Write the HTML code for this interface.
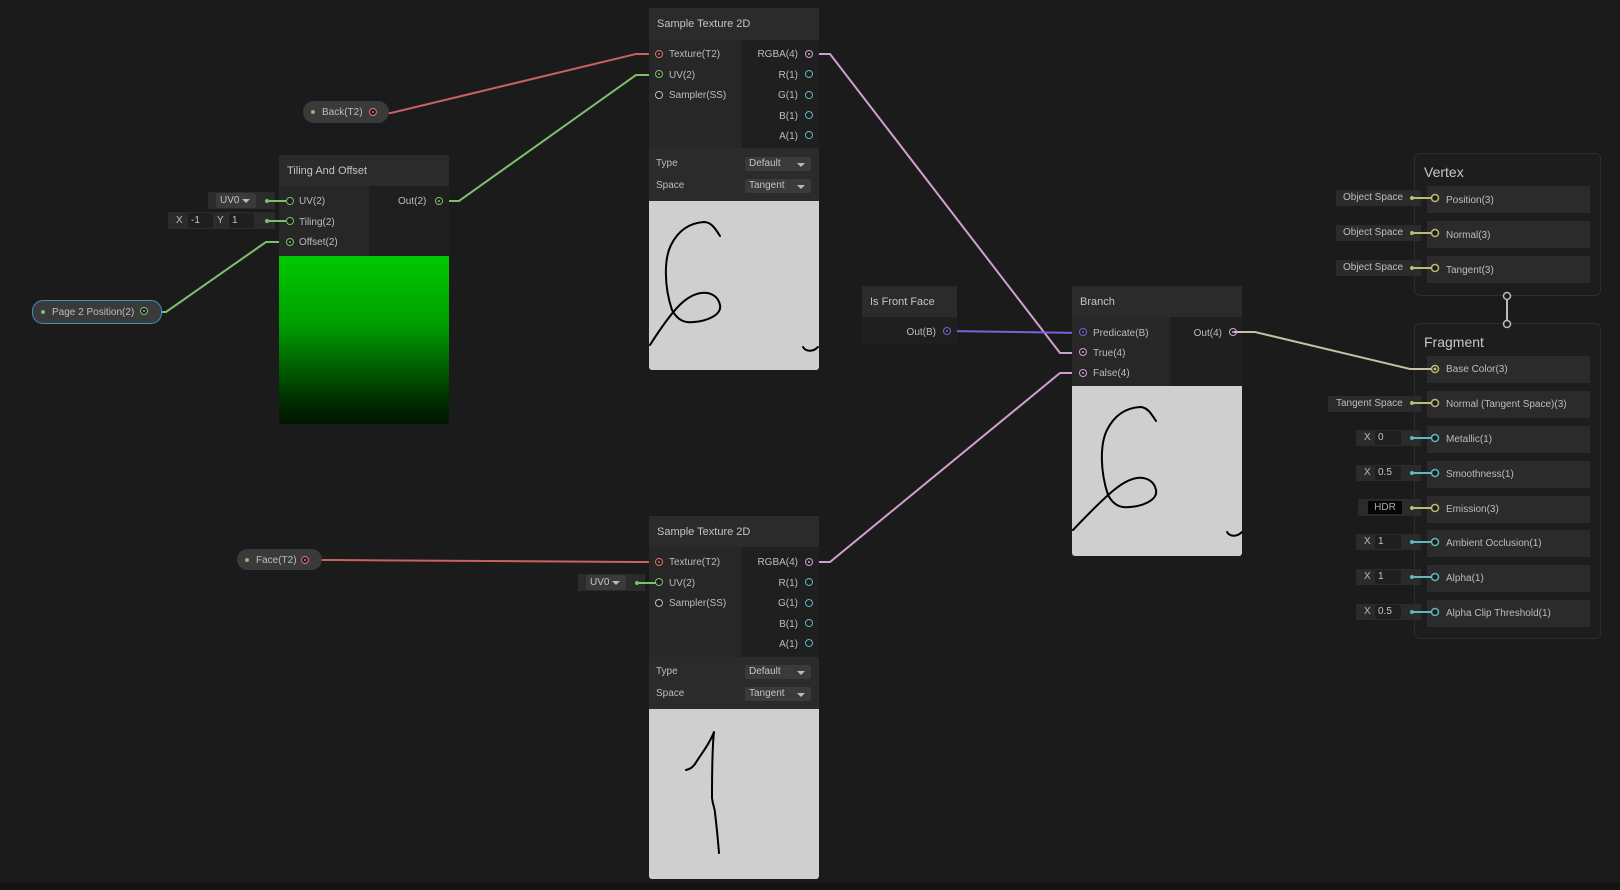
<!DOCTYPE html>
<html><head><meta charset="utf-8">
<style>
*{box-sizing:border-box;margin:0;padding:0}
body{width:1620px;height:890px;background:#1b1b1b;position:relative;overflow:hidden;font-family:"Liberation Sans",sans-serif;font-size:10px;color:#bdbdbd}
.a{position:absolute}
.hdr{background:#2b2b2b;font-size:11px;color:#c4c4c4;padding-left:8px;display:flex;align-items:center}
.lp{background:#272727}
.rp{background:#1f1f1f}
.set{background:#2b2b2b}
.t{position:absolute;white-space:nowrap;line-height:12px}
.r{text-align:right}
.c{position:absolute;width:8px;height:8px;border-radius:50%;border:1.5px solid #bbb;background:#1e1e1e}
.c.f::after{content:"";position:absolute;left:1.5px;top:1.5px;width:2px;height:2px;border-radius:50%;background:currentColor}
.dd{position:absolute;background:#3a3a3a;border-radius:2px;color:#c4c4c4;padding-left:4px;line-height:16px;font-size:10px}
.dd::after{content:"";position:absolute;right:6px;top:6px;border-left:4px solid transparent;border-right:4px solid transparent;border-top:4px solid #bbb}
.fld{position:absolute;background:#2b2b2b}
.in{position:absolute;background:#1f1f1f;border-radius:2px;line-height:16px;padding-left:3px;color:#c4c4c4}
.dot{position:absolute;width:4px;height:4px;border-radius:50%}
.pill{position:absolute;background:#3a3a3a;border-radius:11px}
.row{position:absolute;background:#2b2b2b;left:12px;width:163px;height:27px}
.prev{position:absolute;background:#cfcfcf;border-radius:0 0 3px 3px}
</style></head><body>

<!-- wires -->
<svg class="a" style="left:0;top:0" width="1620" height="890">
<g fill="none" stroke-width="2">
<polyline stroke="#c9625f" points="367,113 391,113 636,54 659,54"/>
<polyline stroke="#7cc06a" points="435,201 459,201 636,75 659,75"/>
<polyline stroke="#7cc06a" points="150,312 166,312 266,242 290,242"/>
<polyline stroke="#c9625f" points="309,560 333,560 636,562 659,562"/>
<polyline stroke="#cfa0cf" points="809,54 830,54 1060,353 1083,353"/>
<polyline stroke="#cfa0cf" points="809,562 830,562 1060,373 1083,373"/>
<polyline stroke="#7a63d6" points="947,331 1083,333"/>
</g>
</svg>

<!-- Back pill -->
<div class="pill" style="left:303px;top:101px;width:86px;height:22px"></div>
<div class="dot" style="left:311px;top:110px;background:#7cc06a"></div>
<div class="t" style="left:322px;top:107px">Back(T2)</div>
<div class="c f" style="left:369px;top:108px;border-color:#e07070;color:#e07070"></div>

<!-- Page 2 Position pill -->
<div class="pill" style="left:32px;top:300px;width:130px;height:24px;border:1px solid #3a8fc8"></div>
<div class="dot" style="left:41px;top:310px;background:#7cc06a"></div>
<div class="t" style="left:52px;top:307px">Page 2 Position(2)</div>
<div class="c f" style="left:140px;top:307px;border-color:#7cc06a;color:#7cc06a"></div>

<!-- Face pill -->
<div class="pill" style="left:237px;top:549px;width:85px;height:21px"></div>
<div class="dot" style="left:245px;top:558px;background:#7cc06a"></div>
<div class="t" style="left:256px;top:555px">Face(T2)</div>
<div class="c f" style="left:301px;top:556px;border-color:#e07070;color:#e07070"></div>

<!-- Tiling And Offset -->
<div class="a hdr" style="left:279px;top:155px;width:170px;height:31px">Tiling And Offset</div>
<div class="a lp" style="left:279px;top:186px;width:90px;height:70px"></div>
<div class="a rp" style="left:369px;top:186px;width:80px;height:70px"></div>
<div class="a" style="left:279px;top:256px;width:170px;height:168px;background:linear-gradient(#00c800,#00a000 40%,#003000 85%,#001500);border-radius:0 0 3px 3px"></div>
<div class="c" style="left:286px;top:197px;border-color:#7cc06a"></div><div class="t" style="left:299px;top:196px">UV(2)</div>
<div class="c" style="left:286px;top:217px;border-color:#7cc06a"></div><div class="t" style="left:299px;top:217px">Tiling(2)</div>
<div class="c f" style="left:286px;top:238px;border-color:#7cc06a;color:#7cc06a"></div><div class="t" style="left:299px;top:237px">Offset(2)</div>
<div class="t" style="left:398px;top:196px">Out(2)</div>
<div class="c f" style="left:435px;top:197px;border-color:#7cc06a;color:#7cc06a"></div>
<div class="fld" style="left:208px;top:192px;width:67px;height:17px"></div>
<div class="dd" style="left:216px;top:193px;width:40px;height:15px;line-height:15px">UV0</div>
<div class="dot" style="left:265px;top:199px;background:#7cc06a"></div>
<div class="a" style="left:269px;top:200px;width:17px;height:2px;background:#7cc06a"></div>
<div class="fld" style="left:168px;top:212px;width:107px;height:17px"></div>
<div class="t" style="left:176px;top:215px">X</div><div class="in" style="left:188px;top:213px;width:25px;height:15px;line-height:15px">-1</div>
<div class="t" style="left:217px;top:215px">Y</div><div class="in" style="left:229px;top:213px;width:25px;height:15px;line-height:15px">1</div>
<div class="dot" style="left:265px;top:219px;background:#7cc06a"></div>
<div class="a" style="left:269px;top:220px;width:17px;height:2px;background:#7cc06a"></div>

<!-- Sample Texture 2D #1 -->
<div class="a hdr" style="left:649px;top:8px;width:170px;height:32px">Sample Texture 2D</div>
<div class="a lp" style="left:649px;top:40px;width:93px;height:108px"></div>
<div class="a rp" style="left:742px;top:40px;width:77px;height:108px"></div>
<div class="a set" style="left:649px;top:148px;width:170px;height:53px"></div>
<div class="c f" style="left:655px;top:50px;border-color:#e07070;color:#e07070"></div><div class="t" style="left:669px;top:49px">Texture(T2)</div>
<div class="c f" style="left:655px;top:70px;border-color:#7cc06a;color:#7cc06a"></div><div class="t" style="left:669px;top:70px">UV(2)</div>
<div class="c" style="left:655px;top:91px"></div><div class="t" style="left:669px;top:90px">Sampler(SS)</div>
<div class="t r" style="left:740px;width:58px;top:49px">RGBA(4)</div><div class="c f" style="left:805px;top:50px;border-color:#d4a0d4;color:#d4a0d4"></div>
<div class="t r" style="left:740px;width:58px;top:70px">R(1)</div><div class="c" style="left:805px;top:70px;border-color:#5fb8c0"></div>
<div class="t r" style="left:740px;width:58px;top:90px">G(1)</div><div class="c" style="left:805px;top:91px;border-color:#5fb8c0"></div>
<div class="t r" style="left:740px;width:58px;top:111px">B(1)</div><div class="c" style="left:805px;top:111px;border-color:#5fb8c0"></div>
<div class="t r" style="left:740px;width:58px;top:131px">A(1)</div><div class="c" style="left:805px;top:131px;border-color:#5fb8c0"></div>
<div class="t" style="left:656px;top:158px">Type</div><div class="dd" style="left:745px;top:157px;width:66px;height:14px;line-height:14px">Default</div>
<div class="t" style="left:656px;top:180px">Space</div><div class="dd" style="left:745px;top:179px;width:66px;height:14px;line-height:14px">Tangent</div>
<svg class="prev" style="left:649px;top:201px" width="170" height="169"><path fill="none" stroke="#000" stroke-width="2" stroke-linecap="round" stroke-linejoin="round" d="M71,35 C66,27 62,21 55,21 C40,22 29,30 22,44 C15,58 15,85 23,109 C29,120 36,122 45,121 C58,120 73,114 71,104 C69,94 60,91 52,92 C39,94 27,103 1,144 M154,146 C157,151 164,151 169,146"/></svg>

<!-- Sample Texture 2D #2 -->
<div class="a hdr" style="left:649px;top:516px;width:170px;height:31px">Sample Texture 2D</div>
<div class="a lp" style="left:649px;top:547px;width:93px;height:110px"></div>
<div class="a rp" style="left:742px;top:547px;width:77px;height:110px"></div>
<div class="a set" style="left:649px;top:657px;width:170px;height:52px"></div>
<div class="c f" style="left:655px;top:558px;border-color:#e07070;color:#e07070"></div><div class="t" style="left:669px;top:557px">Texture(T2)</div>
<div class="c" style="left:655px;top:578px;border-color:#7cc06a"></div><div class="t" style="left:669px;top:578px">UV(2)</div>
<div class="c" style="left:655px;top:599px"></div><div class="t" style="left:669px;top:598px">Sampler(SS)</div>
<div class="t r" style="left:740px;width:58px;top:557px">RGBA(4)</div><div class="c f" style="left:805px;top:558px;border-color:#d4a0d4;color:#d4a0d4"></div>
<div class="t r" style="left:740px;width:58px;top:578px">R(1)</div><div class="c" style="left:805px;top:578px;border-color:#5fb8c0"></div>
<div class="t r" style="left:740px;width:58px;top:598px">G(1)</div><div class="c" style="left:805px;top:599px;border-color:#5fb8c0"></div>
<div class="t r" style="left:740px;width:58px;top:619px">B(1)</div><div class="c" style="left:805px;top:619px;border-color:#5fb8c0"></div>
<div class="t r" style="left:740px;width:58px;top:639px">A(1)</div><div class="c" style="left:805px;top:639px;border-color:#5fb8c0"></div>
<div class="t" style="left:656px;top:666px">Type</div><div class="dd" style="left:745px;top:665px;width:66px;height:14px;line-height:14px">Default</div>
<div class="t" style="left:656px;top:688px">Space</div><div class="dd" style="left:745px;top:687px;width:66px;height:14px;line-height:14px">Tangent</div>
<svg class="prev" style="left:649px;top:709px" width="170" height="170"><path fill="none" stroke="#000" stroke-width="2" stroke-linecap="round" stroke-linejoin="round" d="M37,61 C41,60 43,59 46,55 C52,45 60,36 65,23 C63,40 63,70 63,89 C64,97 66,100 66,104 C68,120 69,132 70,144"/></svg>
<div class="fld" style="left:578px;top:574px;width:67px;height:17px"></div>
<div class="dd" style="left:586px;top:575px;width:40px;height:15px;line-height:15px">UV0</div>
<div class="dot" style="left:635px;top:581px;background:#7cc06a"></div>
<div class="a" style="left:639px;top:582px;width:17px;height:2px;background:#7cc06a"></div>

<!-- Is Front Face -->
<div class="a hdr" style="left:862px;top:286px;width:95px;height:31px">Is Front Face</div>
<div class="a rp" style="left:862px;top:317px;width:95px;height:27px"></div>
<div class="t r" style="left:880px;width:56px;top:327px">Out(B)</div>
<div class="c f" style="left:943px;top:327px;border-color:#7a63d6;color:#7a63d6"></div>

<!-- Branch -->
<div class="a hdr" style="left:1072px;top:286px;width:170px;height:31px">Branch</div>
<div class="a lp" style="left:1072px;top:317px;width:98px;height:69px"></div>
<div class="a rp" style="left:1170px;top:317px;width:72px;height:69px"></div>
<div class="c f" style="left:1079px;top:328px;border-color:#7a63d6;color:#7a63d6"></div><div class="t" style="left:1093px;top:328px">Predicate(B)</div>
<div class="c f" style="left:1079px;top:348px;border-color:#d4a0d4;color:#d4a0d4"></div><div class="t" style="left:1093px;top:348px">True(4)</div>
<div class="c f" style="left:1079px;top:369px;border-color:#d4a0d4;color:#d4a0d4"></div><div class="t" style="left:1093px;top:368px">False(4)</div>
<div class="t r" style="left:1170px;width:52px;top:328px">Out(4)</div>
<div class="c f" style="left:1229px;top:328px;border-color:#d4a0d4;color:#d4a0d4"></div>
<svg class="prev" style="left:1072px;top:386px" width="170" height="170"><path fill="none" stroke="#000" stroke-width="2" stroke-linecap="round" stroke-linejoin="round" d="M84,35 C79,27 75,21 68,21 C53,22 42,30 35,44 C28,58 28,85 36,109 C42,120 49,122 58,121 C71,120 86,114 84,104 C82,94 73,91 65,92 C52,94 40,103 1,144 M155,146 C158,151 165,151 170,146"/></svg>

<!-- Vertex -->
<div class="a" style="left:1414px;top:153px;width:187px;height:143px;background:#1d1d1d;border:1px solid #2e2e2e;border-radius:6px">
<div class="t" style="left:9px;top:10px;font-size:14px;line-height:16px;color:#c8c8c8">Vertex</div>
<div class="row" style="top:32px"></div><div class="row" style="top:67px"></div><div class="row" style="top:102px"></div>
</div>
<div class="t" style="left:1446px;top:195px">Position(3)</div>
<div class="t" style="left:1446px;top:230px">Normal(3)</div>
<div class="t" style="left:1446px;top:265px">Tangent(3)</div>

<!-- Fragment -->
<div class="a" style="left:1414px;top:323px;width:187px;height:316px;background:#1d1d1d;border:1px solid #2e2e2e;border-radius:6px">
<div class="t" style="left:9px;top:10px;font-size:14px;line-height:16px;color:#c8c8c8">Fragment</div>
<div class="row" style="top:32px"></div><div class="row" style="top:67px"></div><div class="row" style="top:102px"></div><div class="row" style="top:137px"></div>
<div class="row" style="top:172px"></div><div class="row" style="top:206px"></div><div class="row" style="top:241px"></div><div class="row" style="top:276px"></div>
</div>
<div class="t" style="left:1446px;top:364px">Base Color(3)</div>
<div class="t" style="left:1446px;top:399px">Normal (Tangent Space)(3)</div>
<div class="t" style="left:1446px;top:434px">Metallic(1)</div>
<div class="t" style="left:1446px;top:469px">Smoothness(1)</div>
<div class="t" style="left:1446px;top:504px">Emission(3)</div>
<div class="t" style="left:1446px;top:538px">Ambient Occlusion(1)</div>
<div class="t" style="left:1446px;top:573px">Alpha(1)</div>
<div class="t" style="left:1446px;top:608px">Alpha Clip Threshold(1)</div>

<!-- vertex inputs -->
<div class="fld" style="left:1336px;top:190px;width:85px;height:16px"></div><div class="t" style="left:1343px;top:192px">Object Space</div>
<div class="fld" style="left:1336px;top:225px;width:85px;height:16px"></div><div class="t" style="left:1343px;top:227px">Object Space</div>
<div class="fld" style="left:1336px;top:260px;width:85px;height:16px"></div><div class="t" style="left:1343px;top:262px">Object Space</div>
<div class="fld" style="left:1328px;top:396px;width:93px;height:16px"></div><div class="t" style="left:1336px;top:398px">Tangent Space</div>

<div class="fld" style="left:1356px;top:430px;width:65px;height:16px"></div><div class="t" style="left:1364px;top:432px">X</div><div class="in" style="left:1375px;top:431px;width:26px;height:14px;line-height:14px">0</div>
<div class="fld" style="left:1356px;top:465px;width:65px;height:16px"></div><div class="t" style="left:1364px;top:467px">X</div><div class="in" style="left:1375px;top:466px;width:26px;height:14px;line-height:14px">0.5</div>
<div class="fld" style="left:1358px;top:499px;width:63px;height:17px"></div><div class="a" style="left:1368px;top:501px;width:34px;height:13px;background:#050505;color:#aaa;text-align:center;line-height:13px">HDR</div>
<div class="fld" style="left:1356px;top:534px;width:65px;height:16px"></div><div class="t" style="left:1364px;top:536px">X</div><div class="in" style="left:1375px;top:535px;width:26px;height:14px;line-height:14px">1</div>
<div class="fld" style="left:1356px;top:569px;width:65px;height:16px"></div><div class="t" style="left:1364px;top:571px">X</div><div class="in" style="left:1375px;top:570px;width:26px;height:14px;line-height:14px">1</div>
<div class="fld" style="left:1356px;top:604px;width:65px;height:16px"></div><div class="t" style="left:1364px;top:606px">X</div><div class="in" style="left:1375px;top:605px;width:26px;height:14px;line-height:14px">0.5</div>

<!-- top-layer wires: base color + connector -->
<svg class="a" style="left:0;top:0" width="1620" height="890">
<polyline fill="none" stroke="#c8c0a0" stroke-width="2" points="1234,332 1255,332 1410,369 1431,369"/>
<line stroke="#bbb" stroke-width="2" x1="1507" y1="299" x2="1507" y2="321"/>
<circle cx="1507" cy="296" r="3.5" fill="#1b1b1b" stroke="#bbb" stroke-width="1.5"/>
<circle cx="1507" cy="324" r="3.5" fill="#1b1b1b" stroke="#bbb" stroke-width="1.5"/>
</svg>

<!-- master ports -->
<svg class="a" style="left:1405px;top:180px" width="40" height="460">
<g stroke-width="2">
<g stroke="#bcbc70"><line x1="8" y1="18" x2="26" y2="18"/><line x1="8" y1="53" x2="26" y2="53"/><line x1="8" y1="88" x2="26" y2="88"/><line x1="8" y1="223" x2="26" y2="223"/><line x1="8" y1="328" x2="26" y2="328"/></g>
<g stroke="#5fb8c0"><line x1="8" y1="258" x2="26" y2="258"/><line x1="8" y1="293" x2="26" y2="293"/><line x1="8" y1="362" x2="26" y2="362"/><line x1="8" y1="397" x2="26" y2="397"/><line x1="8" y1="432" x2="26" y2="432"/></g>
</g>
<g fill="#bcbc70"><circle cx="7" cy="18" r="2"/><circle cx="7" cy="53" r="2"/><circle cx="7" cy="88" r="2"/><circle cx="7" cy="223" r="2"/><circle cx="7" cy="328" r="2"/></g>
<g fill="#5fb8c0"><circle cx="7" cy="258" r="2"/><circle cx="7" cy="293" r="2"/><circle cx="7" cy="362" r="2"/><circle cx="7" cy="397" r="2"/><circle cx="7" cy="432" r="2"/></g>
<g fill="#1d1d1d" stroke-width="1.5" stroke="#bcbc70"><circle cx="30" cy="18" r="3.5"/><circle cx="30" cy="53" r="3.5"/><circle cx="30" cy="88" r="3.5"/><circle cx="30" cy="189" r="3.5"/><circle cx="30" cy="223" r="3.5"/><circle cx="30" cy="328" r="3.5"/></g>
<circle cx="30" cy="189" r="1.5" fill="#bcbc70"/>
<g fill="#1d1d1d" stroke-width="1.5" stroke="#5fb8c0"><circle cx="30" cy="258" r="3.5"/><circle cx="30" cy="293" r="3.5"/><circle cx="30" cy="362" r="3.5"/><circle cx="30" cy="397" r="3.5"/><circle cx="30" cy="432" r="3.5"/></g>
</svg>

<!-- bottom strip -->
<div class="a" style="left:0;top:882px;width:1620px;height:8px;background:#141414"></div>
</body></html>
